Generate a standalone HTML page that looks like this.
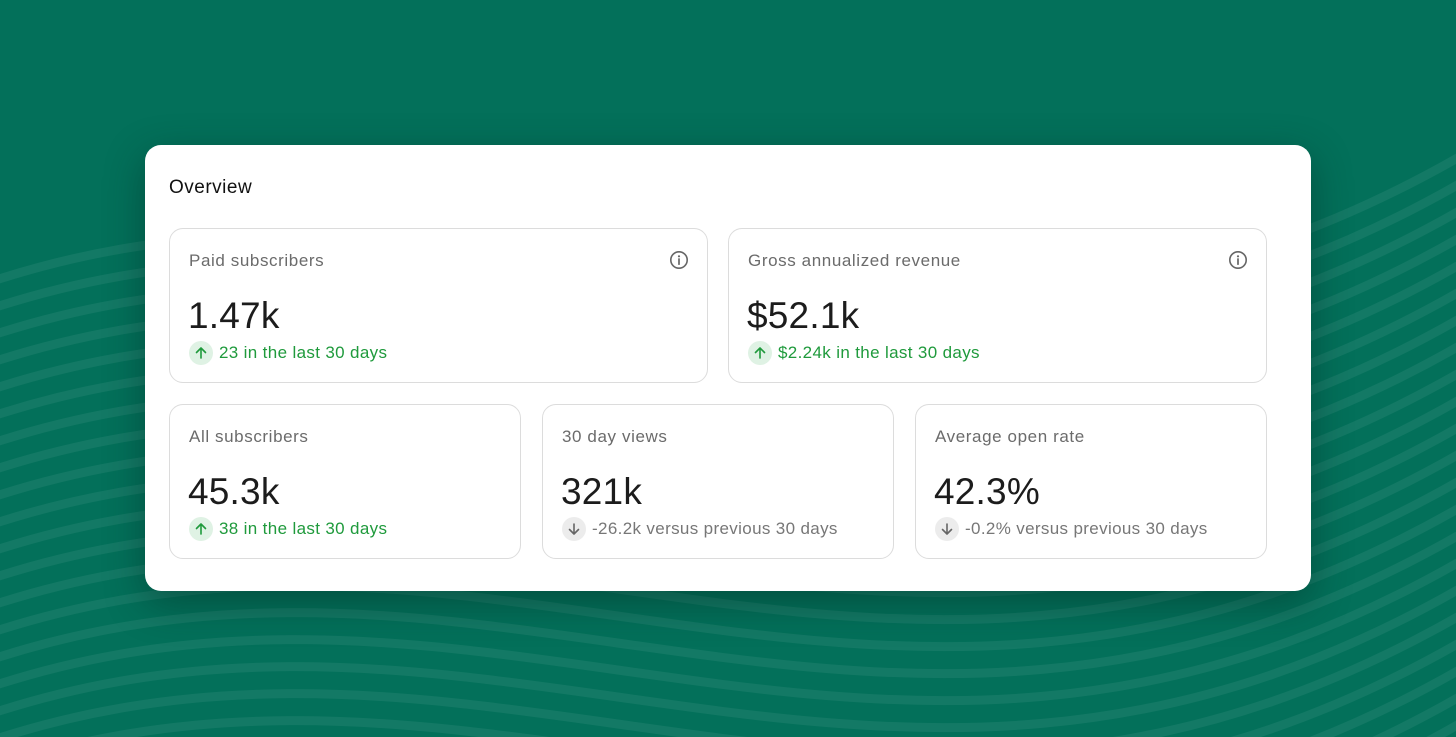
<!DOCTYPE html>
<html><head><meta charset="utf-8"><style>
*{margin:0;padding:0;box-sizing:border-box}
html,body{width:1456px;height:737px;overflow:hidden}
body{background:#03705a;font-family:"Liberation Sans",sans-serif;position:relative}
svg.bg{position:absolute;left:0;top:0;display:block}
.card{position:absolute;left:145px;top:145px;width:1166px;height:446px;background:#fff;border-radius:16px;box-shadow:0 12px 40px rgba(0,40,30,.45)}
.title{position:absolute;left:24px;top:32px;font-size:19px;color:#111;letter-spacing:.5px}
.tile{position:absolute;border:1.5px solid #dcdcdc;border-radius:14px;height:155px}
.lab{position:absolute;left:19px;top:22px;font-size:17px;color:#6b6b6b;letter-spacing:.6px}
.val{position:absolute;left:18px;top:66px;font-size:37px;color:#1c1c1c;letter-spacing:.2px}
.sub{position:absolute;left:19px;top:112px;font-size:17px;display:flex;align-items:center;letter-spacing:.35px}
.ic{width:24px;height:24px;border-radius:50%;display:inline-flex;align-items:center;justify-content:center;margin-right:6px}
.up{color:#1f9a3c}.up .ic{background:#dff2e4}
.dn{color:#777}.dn .ic{background:#ececec}
.info{position:absolute;right:18px;top:21px}
</style></head><body>
<svg class="bg" width="1456" height="737" viewBox="0 0 1456 737">
<g fill="none" stroke="#ffffff" stroke-opacity="0.065" stroke-width="9">
<path d="M-60 300 C500 80 900 520 1520 120"/>
<path d="M-60 327 C500 107 900 547 1520 147"/>
<path d="M-60 354 C500 134 900 574 1520 174"/>
<path d="M-60 381 C500 161 900 601 1520 201"/>
<path d="M-60 408 C500 188 900 628 1520 228"/>
<path d="M-60 435 C500 215 900 655 1520 255"/>
<path d="M-60 462 C500 242 900 682 1520 282"/>
<path d="M-60 489 C500 269 900 709 1520 309"/>
<path d="M-60 516 C500 296 900 736 1520 336"/>
<path d="M-60 543 C500 323 900 763 1520 363"/>
<path d="M-60 570 C500 350 900 790 1520 390"/>
<path d="M-60 597 C500 377 900 817 1520 417"/>
<path d="M-60 624 C500 404 900 844 1520 444"/>
<path d="M-60 651 C500 431 900 871 1520 471"/>
<path d="M-60 678 C500 458 900 898 1520 498"/>
<path d="M-60 705 C500 485 900 925 1520 525"/>
<path d="M-60 732 C500 512 900 952 1520 552"/>
<path d="M-60 759 C500 539 900 979 1520 579"/>
<path d="M-60 786 C500 566 900 1006 1520 606"/>
<path d="M-60 813 C500 593 900 1033 1520 633"/>
<path d="M-60 840 C500 620 900 1060 1520 660"/>
<path d="M-60 867 C500 647 900 1087 1520 687"/>
<path d="M-60 894 C500 674 900 1114 1520 714"/>
<path d="M-60 921 C500 701 900 1141 1520 741"/>
<path d="M-60 948 C500 728 900 1168 1520 768"/>
</g></svg>
<div class="card">
<div class="title">Overview</div>
<div class="tile" style="left:24px;top:83px;width:539px">
<div class="lab">Paid subscribers</div>
<svg class="info" width="20" height="20" viewBox="0 0 20 20"><circle cx="10" cy="10" r="8.2" fill="none" stroke="#666" stroke-width="1.6"/><circle cx="10" cy="6.3" r="1.1" fill="#666"/><path d="M10 9v5.2" stroke="#666" stroke-width="1.7" stroke-linecap="round"/></svg>
<div class="val">1.47k</div>
<div class="sub up"><span class="ic"><svg width="14" height="14" viewBox="0 0 14 14"><path d="M7 12V2M2.5 6.5L7 2l4.5 4.5" fill="none" stroke="#1f9a3c" stroke-width="1.6" stroke-linecap="round" stroke-linejoin="round"/></svg></span>23 in the last 30 days</div>
</div>
<div class="tile" style="left:583px;top:83px;width:539px">
<div class="lab">Gross annualized revenue</div>
<svg class="info" width="20" height="20" viewBox="0 0 20 20"><circle cx="10" cy="10" r="8.2" fill="none" stroke="#666" stroke-width="1.6"/><circle cx="10" cy="6.3" r="1.1" fill="#666"/><path d="M10 9v5.2" stroke="#666" stroke-width="1.7" stroke-linecap="round"/></svg>
<div class="val">$52.1k</div>
<div class="sub up"><span class="ic"><svg width="14" height="14" viewBox="0 0 14 14"><path d="M7 12V2M2.5 6.5L7 2l4.5 4.5" fill="none" stroke="#1f9a3c" stroke-width="1.6" stroke-linecap="round" stroke-linejoin="round"/></svg></span>$2.24k in the last 30 days</div>
</div>
<div class="tile" style="left:24px;top:259px;width:352px">
<div class="lab">All subscribers</div>
<div class="val">45.3k</div>
<div class="sub up"><span class="ic"><svg width="14" height="14" viewBox="0 0 14 14"><path d="M7 12V2M2.5 6.5L7 2l4.5 4.5" fill="none" stroke="#1f9a3c" stroke-width="1.6" stroke-linecap="round" stroke-linejoin="round"/></svg></span>38 in the last 30 days</div>
</div>
<div class="tile" style="left:397px;top:259px;width:352px">
<div class="lab">30 day views</div>
<div class="val">321k</div>
<div class="sub dn"><span class="ic"><svg width="14" height="14" viewBox="0 0 14 14"><path d="M7 2v10M2.5 7.5L7 12l4.5-4.5" fill="none" stroke="#666" stroke-width="1.6" stroke-linecap="round" stroke-linejoin="round"/></svg></span>-26.2k versus previous 30 days</div>
</div>
<div class="tile" style="left:770px;top:259px;width:352px">
<div class="lab">Average open rate</div>
<div class="val">42.3%</div>
<div class="sub dn"><span class="ic"><svg width="14" height="14" viewBox="0 0 14 14"><path d="M7 2v10M2.5 7.5L7 12l4.5-4.5" fill="none" stroke="#666" stroke-width="1.6" stroke-linecap="round" stroke-linejoin="round"/></svg></span>-0.2% versus previous 30 days</div>
</div>
</div>
</body></html>
